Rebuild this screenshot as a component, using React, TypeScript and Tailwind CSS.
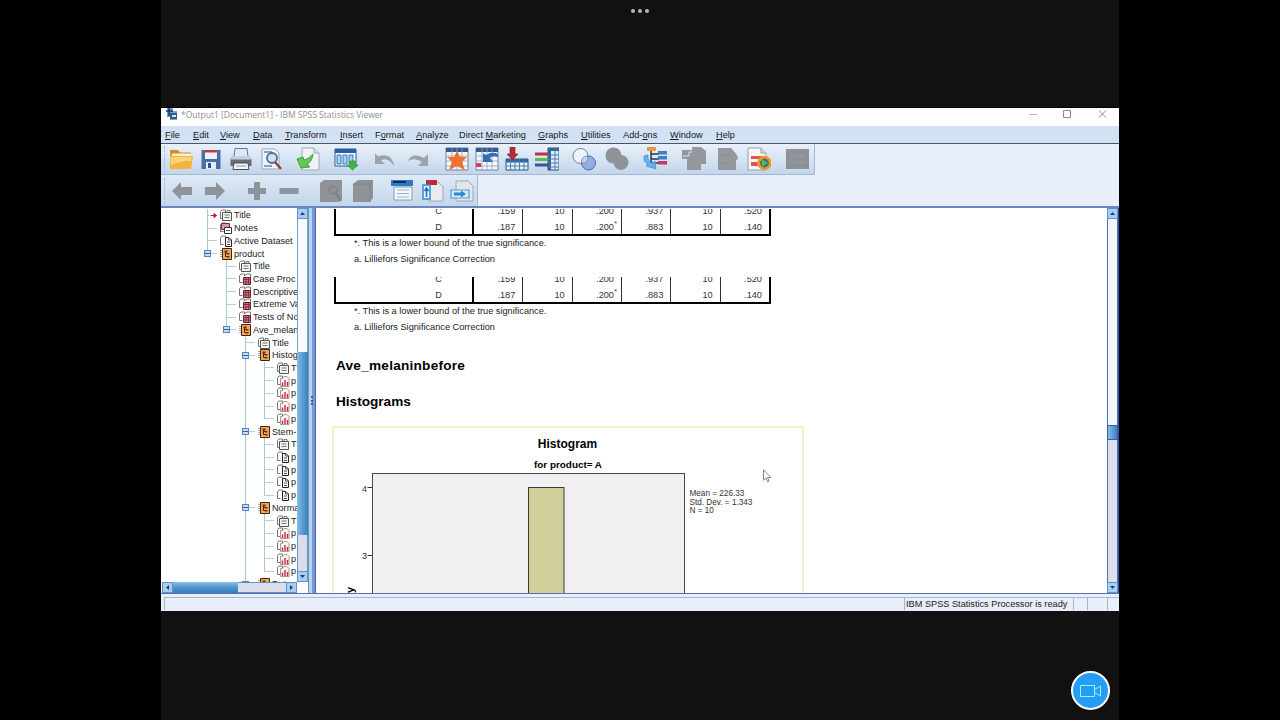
import type { ReactNode } from 'react';
import clsx from 'clsx';

const MENU = [
  { pre: '', key: 'F', post: 'ile', width: 'w-[28px]' },
  { pre: '', key: 'E', post: 'dit', width: 'w-[27px]' },
  { pre: '', key: 'V', post: 'iew', width: 'w-[33px]' },
  { pre: '', key: 'D', post: 'ata', width: 'w-[32px]' },
  { pre: '', key: 'T', post: 'ransform', width: 'w-[55px]' },
  { pre: '', key: 'I', post: 'nsert', width: 'w-[35px]' },
  { pre: 'F', key: 'o', post: 'rmat', width: 'w-[41px]' },
  { pre: '', key: 'A', post: 'nalyze', width: 'w-[43px]' },
  { pre: 'Direct ', key: 'M', post: 'arketing', width: 'w-[79px]' },
  { pre: '', key: 'G', post: 'raphs', width: 'w-[43px]' },
  { pre: '', key: 'U', post: 'tilities', width: 'w-[42px]' },
  { pre: 'Add-', key: 'o', post: 'ns', width: 'w-[47px]' },
  { pre: '', key: 'W', post: 'indow', width: 'w-[46px]' },
  { pre: '', key: 'H', post: 'elp', width: 'w-[30px]' },
];

type NodeIcon = 'title' | 'notes' | 'page' | 'group' | 'table' | 'chart';

interface TreeNode {
  depth: number;
  label: string;
  icon: NodeIcon;
  active?: boolean;
  last?: boolean;
}

const TREE: TreeNode[] = [
  { depth: 0, label: 'Title', icon: 'title', active: true },
  { depth: 0, label: 'Notes', icon: 'notes' },
  { depth: 0, label: 'Active Dataset', icon: 'page' },
  { depth: 0, label: 'product', icon: 'group', last: true },
  { depth: 1, label: 'Title', icon: 'title' },
  { depth: 1, label: 'Case Proc', icon: 'table' },
  { depth: 1, label: 'Descriptive', icon: 'table' },
  { depth: 1, label: 'Extreme Va', icon: 'table' },
  { depth: 1, label: 'Tests of No', icon: 'table' },
  { depth: 1, label: 'Ave_melan', icon: 'group', last: true },
  { depth: 2, label: 'Title', icon: 'title' },
  { depth: 2, label: 'Histog', icon: 'group' },
  { depth: 3, label: 'T', icon: 'title' },
  { depth: 3, label: 'p', icon: 'chart' },
  { depth: 3, label: 'p', icon: 'chart' },
  { depth: 3, label: 'p', icon: 'chart' },
  { depth: 3, label: 'p', icon: 'chart', last: true },
  { depth: 2, label: 'Stem-', icon: 'group' },
  { depth: 3, label: 'T', icon: 'title' },
  { depth: 3, label: 'p', icon: 'page' },
  { depth: 3, label: 'p', icon: 'page' },
  { depth: 3, label: 'p', icon: 'page' },
  { depth: 3, label: 'p', icon: 'page', last: true },
  { depth: 2, label: 'Norma', icon: 'group' },
  { depth: 3, label: 'T', icon: 'title' },
  { depth: 3, label: 'p', icon: 'chart' },
  { depth: 3, label: 'p', icon: 'chart' },
  { depth: 3, label: 'p', icon: 'chart' },
  { depth: 3, label: 'p', icon: 'chart', last: true },
  { depth: 2, label: 'Detr', icon: 'group' },
];

const ROWS = [
  ['C', '.159', '10', '.200', '.937', '10', '.520'],
  ['D', '.187', '10', '.200', '.883', '10', '.140'],
];

export default function App() {
  return (
    <div className="flex h-[720px] w-[1280px] justify-center overflow-hidden bg-black font-['Liberation_Sans',Arial,sans-serif]">
      <div className="relative flex w-[958px] flex-col bg-[#111111]">
        <div className="flex h-[108px] shrink-0 justify-center gap-[3px] border-b border-black pt-[9px]">
          <span className="size-1 rounded-full bg-[#b5b5b5]" />
          <span className="size-1 rounded-full bg-[#b5b5b5]" />
          <span className="size-1 rounded-full bg-[#b5b5b5]" />
        </div>
        <div className="flex h-[503px] shrink-0 flex-col overflow-hidden bg-[#e8eefa]">
          <TitleBar />
          <MenuBar />
          <MainToolbar />
          <OutlineToolbar />
          <div className="flex h-[387px] shrink-0 border-t-2 border-[#6c86bd]">
            <Outline />
            <Splitter />
            <Output />
            <OutputScrollbar />
          </div>
          <StatusBar />
        </div>
        <button className="absolute right-[9px] bottom-[10px] flex size-[39px] items-center justify-center rounded-full border-2 border-white bg-[#239df5]">
          <svg width="22" height="14" viewBox="0 0 22 14" fill="none" stroke="#a5f0f5" strokeWidth="1">
            <path d="M.5 1.500h14v11H.5z M14.500 5.500l6-3.500v10l-6-3.500" />
          </svg>
        </button>
        <svg className="absolute left-[602px] top-[469px]" width="9" height="14" viewBox="0 0 9 14">
          <path d="M.5.8v10.400l2.400-2.200 1.600 3.800 1.600-.7-1.600-3.600h3.400z" fill="#fff" stroke="#666" strokeWidth=".8" />
        </svg>
      </div>
    </div>
  );
}

function TitleBar() {
  return (
    <div className="flex h-[18px] shrink-0 items-start bg-white pl-[5px]">
      <svg width="12" height="12" viewBox="0 0 12 12">
        <path d="M1 0h6v3h4v9H4V9H1z" fill="#7f9ec4" />
        <path d="M0 3h7M3 0v8" stroke="#123a70" strokeWidth="1.500" />
        <path d="M4 5h7v6H4z" fill="#2c5a92" />
        <path d="M6 7h4v2H6z" fill="#d9e8f7" />
      </svg>
      <span className="ml-[3px] mt-[1px] whitespace-nowrap font-['Open_Sans','Noto_Sans',sans-serif] text-[8.500px] leading-[12px] text-[#8f8f8f]">
        *Output1 [Document1] - IBM SPSS Statistics Viewer
      </span>
      <svg className="ml-auto mr-[12px] mt-[1px]" width="79" height="10" viewBox="0 0 79 10" fill="none" stroke="#8b8b8b">
        <path d="M1 5.500h8" stroke="#bbb" />
        <path d="M35.500 1.500h7v7h-7z" />
        <path d="M71 1.500l7 7M78 1.500l-7 7" />
      </svg>
    </div>
  );
}

function MenuBar() {
  return (
    <div className="flex h-[18px] shrink-0 items-center border-b border-[#47566f] bg-[#d3e2f3] pl-[4px] text-[9.200px] text-[#15181f]">
      {MENU.map((item) => (
        <span key={item.key + item.post} className={clsx('shrink-0 whitespace-pre leading-[12px]', item.width)}>
          {item.pre}
          <span className="underline underline-offset-1">{item.key}</span>
          {item.post}
        </span>
      ))}
    </div>
  );
}

function Icon({ className, children }: { className?: string; children: ReactNode }) {
  return (
    <svg className={clsx('shrink-0', className)} width="24" height="24" viewBox="0 0 24 24">
      {children}
    </svg>
  );
}

function Grip() {
  return <div className="h-[26px] w-[2px] shrink-0 border-l border-dotted border-[#9fb0cc] ml-[3px]" />;
}

function MainToolbar() {
  return (
    <div className="flex h-[31px] w-[654px] shrink-0 items-center border-r border-b border-[#a3b6d2] bg-linear-to-b from-[#e9f1fb] to-[#c3d6ea]">
      <Grip />
      <Icon className="ml-[3px]">
        <path d="M1 3h8l2 2.500h11V21H2z" fill="#d88a1c" />
        <path d="M3 6.500h19v8H3z" fill="#fff1c9" />
        <path d="M1 9h23l-2 13H1z" fill="#f5b23c" />
        <path d="M1.500 10H23l-1 4Q10 14 2 18z" fill="#fbd27a" />
      </Icon>
      <Icon className="ml-[6px]">
        <path d="M2.500 3h19v19h-19z" fill="#4a6fa8" />
        <path d="M6 3h12v9H6z" fill="#eef2f8" />
        <path d="M6 3h12v2.500H6z" fill="#c0384a" />
        <path d="M7 15h10v7H7z" fill="#e6ecf4" />
        <path d="M9 16h3v5H9z" fill="#33527f" />
      </Icon>
      <Icon className="ml-[6px]">
        <path d="M6 1.500h12l1 8H5z" fill="#d7ebfa" stroke="#5c7a9c" />
        <path d="M4 9h16l2.500 3v7h-21v-7z" fill="#656f7b" />
        <path d="M4 9h16l2.500 3.500h-21z" fill="#c9d0d8" />
        <path d="M5 16h14l1 6.500H4z" fill="#f4f7fa" stroke="#444e5a" />
        <path d="M7 19h10" stroke="#8b949e" />
      </Icon>
      <Icon className="ml-[6px]">
        <path d="M3 2h13l4 4v16H3z" fill="#f1f5fa" stroke="#9aa7b8" />
        <path d="M5 5h8M5 19h8" stroke="#7fa4ce" strokeWidth="2" />
        <circle cx="13" cy="11" r="5" fill="#cfe3f7" stroke="#4f6d9a" strokeWidth="1.800" />
        <path d="M16 15l6 7" stroke="#8a4a36" strokeWidth="2.500" />
      </Icon>
      <Icon className="ml-[13px]">
        <path d="M6 1h12l5 5v17H6z" fill="#f1f3f5" stroke="#a3abb2" />
        <path d="M18 1v5h5" fill="#dce0e4" stroke="#a3abb2" />
        <path d="M1 12l4 9 9-1-3-3q5-2 6-10-4 5-9 6l-1-3z" fill="#5fcb55" stroke="#2d8f2b" strokeWidth=".8" />
      </Icon>
      <Icon className="ml-[14px]">
        <path d="M1 2h21v17H1z" fill="#f5f9fd" stroke="#2a5b94" />
        <path d="M1 2h21v4H1z" fill="#27619f" />
        <path d="M3 8h4v9H3zM9 8h4v9H9zM15 8h4v9h-4z" fill="#a9d0ee" stroke="#347ab6" />
        <path d="M16 14h5v4h3l-5.500 5-5.500-5h3z" fill="#43b83f" stroke="#23802a" strokeWidth=".6" />
      </Icon>
      <Icon className="ml-[15px]">
        <path d="M2 6v11h10l-4-3.500q7-4 13 6-2-15-16-10z" fill="#9ba3ad" />
      </Icon>
      <Icon className="ml-[9px]">
        <path d="M22 7v12H12l4-4q-7-5-14-1 4-9 16-3z" fill="#9ba3ad" />
      </Icon>
      <Icon className="ml-[15px]">
        <path d="M1 1h22v22H1z" fill="#f6f8fb" stroke="#7083a5" />
        <path d="M1 1h22v4H1z" fill="#37598f" />
        <path d="M1 9h22M1 14h22M1 19h22M7 1v22M12 1v22M17 1v22" stroke="#8ca0c0" strokeWidth=".8" />
        <path d="M12 4l3 6h7l-5 5 3 8-8-4-8 4 3-8-5-5h7z" fill="#f2702f" />
      </Icon>
      <Icon className="ml-[6px]">
        <path d="M1 1h22v22H1z" fill="#f6f8fb" stroke="#7083a5" />
        <path d="M1 1h22v4H1z" fill="#37598f" />
        <path d="M1 9h22M1 14h22M1 19h22M7 1v22M12 1v22M17 1v22" stroke="#8ca0c0" strokeWidth=".8" />
        <path d="M1 16h5v4H1z" fill="#d63b55" />
        <path d="M8 15V6l3 2q6-4 12-1v3q-6-2-8 1l3 4z" fill="#326fb5" />
      </Icon>
      <Icon className="ml-[6px]">
        <path d="M1 12h22v11H1z" fill="#e6eff8" stroke="#2b5688" />
        <path d="M1 12h22v3.500H1z" fill="#2d659d" />
        <path d="M1 19h22M5.500 12v11M10 12v11M14.500 12v11M19 12v11" stroke="#4c7daf" />
        <path d="M5 0h5v7h3l-5.500 6L2 7h3z" fill="#bf2935" stroke="#821a24" strokeWidth=".6" />
      </Icon>
      <Icon className="ml-[6px]">
        <path d="M13 1h11v22H13z" fill="#e1edf8" stroke="#27527f" />
        <path d="M13 1h11v3H13zM13 1h3v22h-3z" fill="#2d659d" />
        <path d="M12 8h12M12 12h12M12 16h12M12 20h12M20 1v22" stroke="#4c7daf" />
        <path d="M0 7h13" stroke="#bd3140" strokeWidth="3" />
        <path d="M0 12.500h13" stroke="#5eb944" strokeWidth="3" />
        <path d="M0 18h13" stroke="#3a539c" strokeWidth="3" />
      </Icon>
      <Icon className="ml-[13px]">
        <circle cx="8.500" cy="9" r="7.500" fill="#eef3fa" stroke="#707f99" />
        <circle cx="16.500" cy="16" r="7" fill="#86a5df" fillOpacity=".85" stroke="#4c6dae" />
        <path d="M9.700 16.200Q9 9 15.500 9q2 7-5.800 7.200z" fill="#c5d3ee" stroke="#7384a4" strokeWidth=".7" />
      </Icon>
      <Icon className="ml-[9px]">
        <circle cx="8.500" cy="8.500" r="8" fill="#8f9398" />
        <circle cx="16" cy="15.500" r="7.500" fill="#8f9398" />
      </Icon>
      <Icon className="ml-[14px]">
        <path d="M8 4v12M8 7h8M8 12h8M8 16h8" stroke="#26364f" strokeWidth="1.500" fill="none" />
        <path d="M4 0h9v4H4z" fill="#e39a3d" />
        <path d="M15 4h9v3.500h-9zM15 9h9v3.500h-9z" fill="#3f7fc4" />
        <path d="M15 14h9v3.500h-9z" fill="#c8375a" />
        <path d="M1 9q-1 6 4 8l-2 2 10 3-1-8-2 2q-6-1-5-8z" fill="#63b2ee" stroke="#2f7fc4" strokeWidth=".6" />
      </Icon>
      <Icon className="ml-[15px]">
        <path d="M0 3h10V0h9l5 4v13h-5v6H5V12H0z" fill="#94989d" />
        <path d="M1 9h6V5h3" stroke="#dfe3e8" fill="none" />
      </Icon>
      <Icon className="ml-[10px]">
        <path d="M2 1h13l6 7 1 4-2 1v10H2z" fill="#94989d" />
        <path d="M6 8h8M6 16h9" stroke="#858a90" />
      </Icon>
      <Icon className="ml-[7px]">
        <path d="M1 1h13l5 5v17H1z" fill="#f5f6f8" stroke="#979fa9" />
        <path d="M14 1v5h5" fill="#d9dde2" stroke="#979fa9" />
        <path d="M4 9h11v3H4zM4 15h8v4H4z" fill="#e35351" />
        <circle cx="17.500" cy="16" r="5.800" fill="#47678a" stroke="#e89a25" strokeWidth="2.800" />
        <path d="M15 12.500l6 3.500-6 3.500z" fill="#5cbb48" />
      </Icon>
      <Icon className="ml-[14px]">
        <path d="M1 2h23v20H1z" fill="#8e9297" />
        <path d="M5 7h6v4H5zM13 7h7v4h-7zM5 14h15v3H5z" fill="#93979c" />
      </Icon>
    </div>
  );
}

function OutlineToolbar() {
  return (
    <div className="flex h-[31px] w-[317px] shrink-0 items-center border-r border-[#a3b6d2] bg-linear-to-b from-[#dfeaf7] to-[#c3d6ea]">
      <Grip />
      <Icon className="ml-[4px]">
        <path d="M2 12l9-9v5h11v8H11v5z" fill="#8f949a" />
      </Icon>
      <Icon className="ml-[9px]">
        <path d="M22 12l-9-9v5H2v8h11v5z" fill="#8f949a" />
      </Icon>
      <Icon className="ml-[18px]">
        <path d="M9 3h6v6h6v6h-6v6H9v-6H3V9h6z" fill="#8f949a" />
      </Icon>
      <Icon className="ml-[8px]">
        <path d="M2.500 9h19v6h-19z" fill="#8f949a" />
      </Icon>
      <Icon className="ml-[18px]">
        <path d="M1 4l4-3h18v19l-3 3H1z" fill="#8f9398" />
        <circle cx="14" cy="11" r="4" fill="none" stroke="#7b8086" />
        <path d="M17 14l5 8" stroke="#7b8086" strokeWidth="2" />
      </Icon>
      <Icon className="ml-[8px]">
        <path d="M2 5l5-4h15v18l-3 4H2z" fill="#8f9398" />
        <path d="M2 5h17v18M19 5l3-4" stroke="#7f848a" fill="none" />
      </Icon>
      <Icon className="ml-[15px]">
        <path d="M1 1h22v6H1z" fill="#2f7bc2" />
        <path d="M3 3h13" stroke="#0f2c55" strokeWidth="2" />
        <path d="M4 8h18v13H4z" fill="#f4f8fb" stroke="#829bb5" />
        <path d="M7 11h12M7 14.500h12M7 18h12" stroke="#94b3cb" />
      </Icon>
      <Icon className="ml-[6px]">
        <path d="M9 3h9l5 5v14H9z" fill="#e9ebee" stroke="#a0a7b0" />
        <path d="M6 1h11v5H6z" fill="#c2283b" />
        <path d="M3 6h7v14H3z" fill="#e7f2fb" stroke="#2f8bd0" strokeWidth="1.500" />
        <path d="M6.500 18v-8M4.500 12l2-3 2 3" stroke="#1f6cb5" strokeWidth="1.500" fill="none" />
      </Icon>
      <Icon className="ml-[6px]">
        <path d="M6 2h12l5 5v15H6z" fill="#e4e7ea" stroke="#a0a7b0" />
        <path d="M1 11h18v8H1z" fill="#d5eafa" stroke="#4f9bd8" strokeWidth="1.200" />
        <path d="M4 13.500h7v-2l5 3.500-5 3.500v-2H4z" fill="#2f84ce" />
      </Icon>
    </div>
  );
}

function TreeIcon({ type }: { type: NodeIcon }) {
  if (type === 'group') {
    return (
      <svg className="shrink-0" width="13" height="12" viewBox="0 0 13 12">
        <path d="M2.500.5h9v11h-9z" fill="#f3a654" stroke="#3e2412" />
        <path d="M5.500 3v5.500H7M5.500 5.500H7" stroke="#4c2208" fill="none" />
        <path d="M4.500 2.500h3v2h-3zM7 5h2.500v1.500H7zM7 8h2.500v1.500H7z" fill="#6d2d10" />
        <path d="M1 2v8" stroke="#555" strokeDasharray="1 1" />
      </svg>
    );
  }
  return (
    <svg className="shrink-0" width="13" height="12" viewBox="0 0 13 12" fill="none">
      <path d="M.5 9.500V2.500L2 1h3.500v2M.5 9.500h3" stroke="#777" />
      {type === 'title' && (
        <>
          <path d="M2.500 3.500h9v8h-9z" fill="#f3f3f3" stroke="#555" />
          <path d="M7 3V1.500h3V3M4.500 6h5M4.500 8.500h5" stroke="#777" />
        </>
      )}
      {type === 'notes' && (
        <>
          <path d="M1.500 1.500h8v6h-8z" fill="#d89aa5" stroke="#7d2a3a" />
          <path d="M4.500 5.500h7v6h-7z" fill="#fff" stroke="#333" />
          <path d="M6 8.500h4" stroke="#555" />
        </>
      )}
      {type === 'page' && (
        <>
          <path d="M5.500 2.500h3.500l2.500 2.500v6.500h-6z" fill="#f5f5f5" stroke="#222" />
          <path d="M8.500 2.500V5h3M7 7h3M7 9.500h3" stroke="#555" />
        </>
      )}
      {type === 'table' && (
        <>
          <path d="M6 2.500L8 1h3.500v4" stroke="#777" />
          <path d="M4.500 4.500h7v7h-7z" fill="#c98995" stroke="#74192c" />
          <path d="M4.500 6.500h7M4.500 9h7M7 5v6.500M9.500 5v6.500" stroke="#8a2b40" />
        </>
      )}
      {type === 'chart' && (
        <>
          <path d="M3.500 11.500v-8h2L7 1.500h3l2 2v8z" fill="#fdf3f4" stroke="#a99" />
          <path d="M5.500 11V7.500M8 11V5M10.500 11V7" stroke="#c42b45" strokeWidth="1.400" />
        </>
      )}
    </svg>
  );
}

function TreeRow({ node }: { node: TreeNode }) {
  const isGroup = node.icon === 'group';
  return (
    <div className="flex h-[12.720px] items-center pl-[46px]">
      {Array.from({ length: node.depth }, (_, i) => (
        <span
          key={i}
          className={clsx('h-full w-[19px] shrink-0 border-l', i === 2 ? 'border-[#a9c8d3]' : 'border-transparent')}
        />
      ))}
      <span className="relative flex h-full w-[13px] shrink-0 items-center">
        <span
          className={clsx(
            'absolute left-0 top-0 border-l border-[#a9c8d3]',
            node.last ? 'h-1/2' : 'h-full',
          )}
        />
        <span className="w-[10px] border-t border-[#b7cfd9]" />
        {isGroup && (
          <span className="absolute -left-[3px] flex size-[7px] items-center border border-[#5583bd] bg-[#c5ddf5]">
            <span className="h-px w-full bg-[#335f9e]" />
          </span>
        )}
        {node.active && (
          <svg className="absolute left-[4px]" width="7" height="7" viewBox="0 0 7 7">
            <path d="M0 3.500h4M3 1.500l2.500 2L3 5.500z" fill="#d3122b" stroke="#d3122b" />
          </svg>
        )}
      </span>
      <TreeIcon type={node.icon} />
      <span className="ml-px whitespace-nowrap text-[9.100px] leading-[12px] text-[#222]">{node.label}</span>
    </div>
  );
}

function Arrow({ dir }: { dir: 'up' | 'down' | 'left' | 'right' }) {
  const paths = {
    up: 'M1 5l2.500-3L6 5z',
    down: 'M1 2l2.500 3L6 2z',
    left: 'M5 1L2 3.500 5 6z',
    right: 'M2 1l3 2.500L2 6z',
  };
  return (
    <span className="flex size-[11px] shrink-0 items-center justify-center border border-[#5f93cf] bg-[#a9cdf1]">
      <svg width="7" height="7" viewBox="0 0 7 7">
        <path d={paths[dir]} fill="#1d3f74" />
      </svg>
    </span>
  );
}

function Outline() {
  return (
    <div className="flex h-full w-[147px] shrink-0 bg-white">
      <div className="flex w-[136px] flex-col">
        <div className="h-[374px] overflow-hidden pt-px">
          {TREE.map((node, i) => (
            <TreeRow key={i} node={node} />
          ))}
        </div>
        <div className="ml-px flex h-[11px]">
          <Arrow dir="left" />
          <div className="w-[65px] bg-linear-to-b from-[#8dbfe8] via-[#4f94cf] to-[#3b7cbd]" />
          <div className="flex-1 border-y border-[#5f93cf] bg-[#dcdde8]" />
          <Arrow dir="right" />
        </div>
      </div>
      <div className="flex h-[374px] w-[11px] flex-col">
        <Arrow dir="up" />
        <div className="h-[133px] border-x border-[#6ea7c9] bg-[#f7fafc]" />
        <div className="h-[183px] bg-linear-to-r from-[#86bce4] via-[#5a9dd4] to-[#3f80bf]" />
        <div className="flex-1 border-x border-[#5f93cf] bg-[#dddde8]" />
        <Arrow dir="down" />
      </div>
    </div>
  );
}

function Splitter() {
  return (
    <div className="flex w-[8px] shrink-0 items-center justify-center border-x border-l-[#63a0b4] border-r-[#4d67a4] bg-linear-to-r from-[#b6d3f1] from-50% to-[#7797d8] to-50%">
      <div className="flex flex-col gap-[1.500px]">
        <span className="size-[2px] rounded-full bg-[#1f3b86]" />
        <span className="size-[2px] rounded-full bg-[#1f3b86]" />
        <span className="size-[2px] rounded-full bg-[#1f3b86]" />
      </div>
    </div>
  );
}

function NormalityBlock() {
  return (
    <div className="h-[67.500px] shrink-0 overflow-hidden pt-px">
      <div className="h-[27px] overflow-hidden">
        <div className="-mt-[6px] ml-[18px] w-[437px] border-x-2 border-b-2 border-black text-[9.200px] leading-[17px] text-[#333]">
          {ROWS.map((row) => (
            <div key={row[0]} className="flex h-[15px] first:h-[16px]">
              <span className="w-[138px] shrink-0 border-r-2 border-black pr-[30px] text-right">{row[0]}</span>
              {row.slice(1).map((value, i) => (
                <span
                  key={i}
                  className={clsx('relative flex-1 pr-[7px] text-right', i < 5 && 'border-r border-[#333]')}
                >
                  {value}
                  {row[0] === 'D' && i === 2 && (
                    <span className="absolute right-[4px] -top-[4px] text-[7px]">*</span>
                  )}
                </span>
              ))}
            </div>
          ))}
        </div>
      </div>
      <div className="-mt-px pl-[38px] text-[9.200px] leading-[16px] text-[#222]">
        <p>*. This is a lower bound of the true significance.</p>
        <p>a. Lilliefors Significance Correction</p>
      </div>
    </div>
  );
}

function Histogram() {
  return (
    <svg className="ml-[16px] block shrink-0" width="472" height="170" viewBox="332 426 472 170">
      <rect x="333" y="427" width="470" height="200" fill="#fff" stroke="#eaeeb0" strokeWidth="1.500" />
      <text x="567.500" y="448" textAnchor="middle" fontSize="12" fontWeight="bold">
        Histogram
      </text>
      <text x="568" y="468" textAnchor="middle" fontSize="9.900" fontWeight="bold">
        for product= A
      </text>
      <rect x="372.500" y="473.500" width="312" height="150" fill="#f1eff2" stroke="#4a4a4a" />
      <rect x="528.500" y="487.500" width="35.500" height="140" fill="#d0d19a" stroke="#3c3d2a" />
      <path d="M367.500 487.500h5M367.500 555.500h5" stroke="#333" />
      <text x="367" y="492" textAnchor="end" fontSize="9" fill="#333">
        4
      </text>
      <text x="367" y="559" textAnchor="end" fontSize="9" fill="#333">
        3
      </text>
      <text x="353.500" y="593" fontSize="11" fontWeight="bold" transform="rotate(-90 353.500 593)">
        y
      </text>
      <g fontSize="8.200" fill="#333">
        <text x="689.500" y="496">Mean = 226.33</text>
        <text x="689.500" y="504.500">Std. Dev. = 1.343</text>
        <text x="689.500" y="512.900">N = 10</text>
      </g>
    </svg>
  );
}

function Output() {
  return (
    <div className="flex min-w-0 flex-1 flex-col overflow-hidden bg-white">
      <NormalityBlock />
      <NormalityBlock />
      <h2 className="mt-[14px] shrink-0 pl-[20px] text-[13.600px] font-bold leading-[18px] tracking-[0.250px] text-black">
        Ave_melaninbefore
      </h2>
      <h2 className="mt-[18px] mb-[15px] shrink-0 pl-[20px] text-[13.600px] font-bold leading-[18px] text-black">
        Histograms
      </h2>
      <Histogram />
    </div>
  );
}

function OutputScrollbar() {
  return (
    <div className="flex w-[12px] shrink-0 flex-col border-r border-[#2f4fa0]">
      <Arrow dir="up" />
      <div className="h-[206px] border-x border-[#4a6fb8] bg-[#f3f5fb]" />
      <div className="h-[15px] border border-[#2f65ab] bg-linear-to-r from-[#86bce4] to-[#3f80bf]" />
      <div className="flex-1 border-x border-[#4a6fb8] bg-[#dddfea]" />
      <Arrow dir="down" />
    </div>
  );
}

function StatusBar() {
  return (
    <div className="flex flex-1 items-stretch border-t border-[#5570aa] bg-[#e8eefa] pt-[3px] pb-[2px] text-[9.200px] leading-[12px] text-[#222]">
      <div className="ml-[3px] w-[740px] border-l border-t border-[#a9b5cd]" />
      <div className="w-[169px] whitespace-nowrap border-l border-t border-[#a9b5cd] pl-px">
        IBM SPSS Statistics Processor is ready
      </div>
      <div className="w-[14px] border-l border-t border-[#a9b5cd]" />
      <div className="w-[20px] border-l border-t border-[#a9b5cd]" />
      <div className="flex-1 border-l border-t border-[#a9b5cd]" />
    </div>
  );
}
